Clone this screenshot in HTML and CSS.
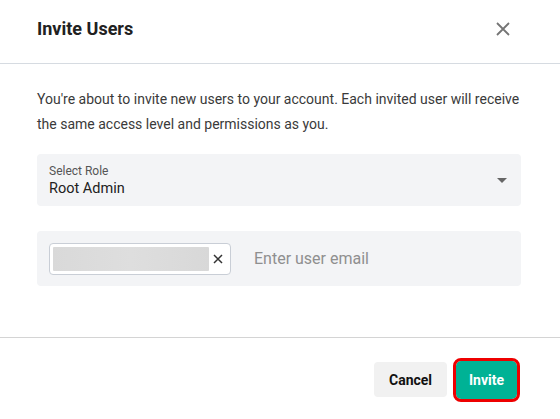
FILE: index.html
```html
<!DOCTYPE html>
<html lang="en">
<head>
    <meta charset="UTF-8">
    <meta name="viewport" content="width=device-width, initial-scale=1.0">
    <title>Invite Users</title>
    <link rel="stylesheet" href="styles.css">
</head>
<body>
    <div class="modal">
        <div class="modal-header">
            <h1>Invite Users</h1>
            <button class="close-btn" aria-label="Close">
                <svg width="14" height="14" viewBox="0 0 14 14">
                    <path d="M1 1L13 13M13 1L1 13" stroke="#757575" stroke-width="1.8" fill="none"/>
                </svg>
            </button>
        </div>
        <div class="modal-body">
            <p class="intro">You're about to invite new users to your account. Each invited user will receive the same access level and permissions as you.</p>
            <div class="select-field">
                <div class="select-text">
                    <span class="select-label">Select Role</span>
                    <span class="select-value">Root Admin</span>
                </div>
                <span class="select-arrow"></span>
            </div>
            <div class="email-field">
                <div class="chip">
                    <span class="chip-blur"></span>
                    <svg class="chip-x" width="10" height="10" viewBox="0 0 10 10">
                        <path d="M1 1L9 9M9 1L1 9" stroke="#333" stroke-width="1.5" fill="none"/>
                    </svg>
                </div>
                <span class="email-placeholder">Enter user email</span>
            </div>
        </div>
        <div class="modal-footer">
            <button class="btn btn-cancel">Cancel</button>
            <button class="btn btn-invite">Invite</button>
        </div>
    </div>
</body>
</html>
```

FILE: styles.css
```css
body {
    margin: 0;
    font-family: Roboto, "Liberation Sans", sans-serif;
    background-color: #ffffff;
    color: #212121;
}

.modal {
    width: 560px;
    height: 419px;
    display: flex;
    flex-direction: column;
}

.modal-header {
    height: 64px;
    border-bottom: 1px solid #d6dbe1;
    display: flex;
    align-items: center;
    justify-content: space-between;
    padding: 0 50px 6px 37px;
    box-sizing: border-box;
}

.modal-header h1 {
    margin: 0;
    font-size: 18px;
    font-weight: 700;
    color: #212121;
}

.close-btn {
    background: none;
    border: none;
    padding: 0;
    display: flex;
    cursor: pointer;
}

.modal-body {
    padding: 23px 39px 0 37px;
    height: 274px;
    box-sizing: border-box;
    border-bottom: 1px solid #d4d4d4;
}

.intro {
    margin: 0 0 17px;
    font-size: 14px;
    line-height: 25px;
    color: #3a3a3a;
}

.select-field {
    height: 52px;
    background-color: #f3f4f6;
    border-radius: 4px;
    display: flex;
    align-items: center;
    justify-content: space-between;
    padding: 0 14px 0 12px;
}

.select-text {
    display: flex;
    flex-direction: column;
    padding-top: 1px;
}

.select-label {
    font-size: 12px;
    line-height: 15px;
    color: #555555;
}

.select-value {
    font-size: 14.5px;
    line-height: 19px;
    color: #212121;
}

.select-arrow {
    width: 0;
    height: 0;
    border-left: 5px solid transparent;
    border-right: 5px solid transparent;
    border-top: 5px solid #666666;
}

.email-field {
    margin-top: 25px;
    height: 55px;
    background-color: #f3f4f6;
    border-radius: 4px;
    display: flex;
    align-items: center;
    padding: 0 12px;
    gap: 23px;
}

.chip {
    width: 182px;
    height: 32px;
    box-sizing: border-box;
    background-color: #ffffff;
    border: 1px solid #c9ced6;
    border-radius: 4px;
    display: flex;
    align-items: center;
    padding: 3px 7px 3px 3px;
    justify-content: space-between;
}

.chip-blur {
    width: 156px;
    height: 100%;
    background: linear-gradient(90deg, #d9d9d9, #dedede 50%, #d8d8d8);
    border-radius: 1px;
}

.email-placeholder {
    font-size: 16px;
    color: #8f8f8f;
}

.modal-footer {
    flex: 1;
    display: flex;
    justify-content: flex-end;
    align-items: center;
    gap: 6px;
    padding: 2px 43px 0 0;
    box-sizing: border-box;
}

.btn {
    font-family: Roboto, "Liberation Sans", sans-serif;
    font-size: 14px;
    font-weight: 700;
    border: none;
    border-radius: 4px;
    height: 35px;
    padding: 0 15px;
    cursor: pointer;
}

.btn-cancel {
    background-color: #f1f1f1;
    color: #111111;
    width: 73px;
}

.btn-invite {
    background-color: #00b295;
    color: #ffffff;
    width: 61px;
    height: 38px;
    padding: 0;
    outline: 3px solid #ee0000;
    outline-offset: 0;
    border-radius: 5px;
    margin-left: 3px;
}
```
